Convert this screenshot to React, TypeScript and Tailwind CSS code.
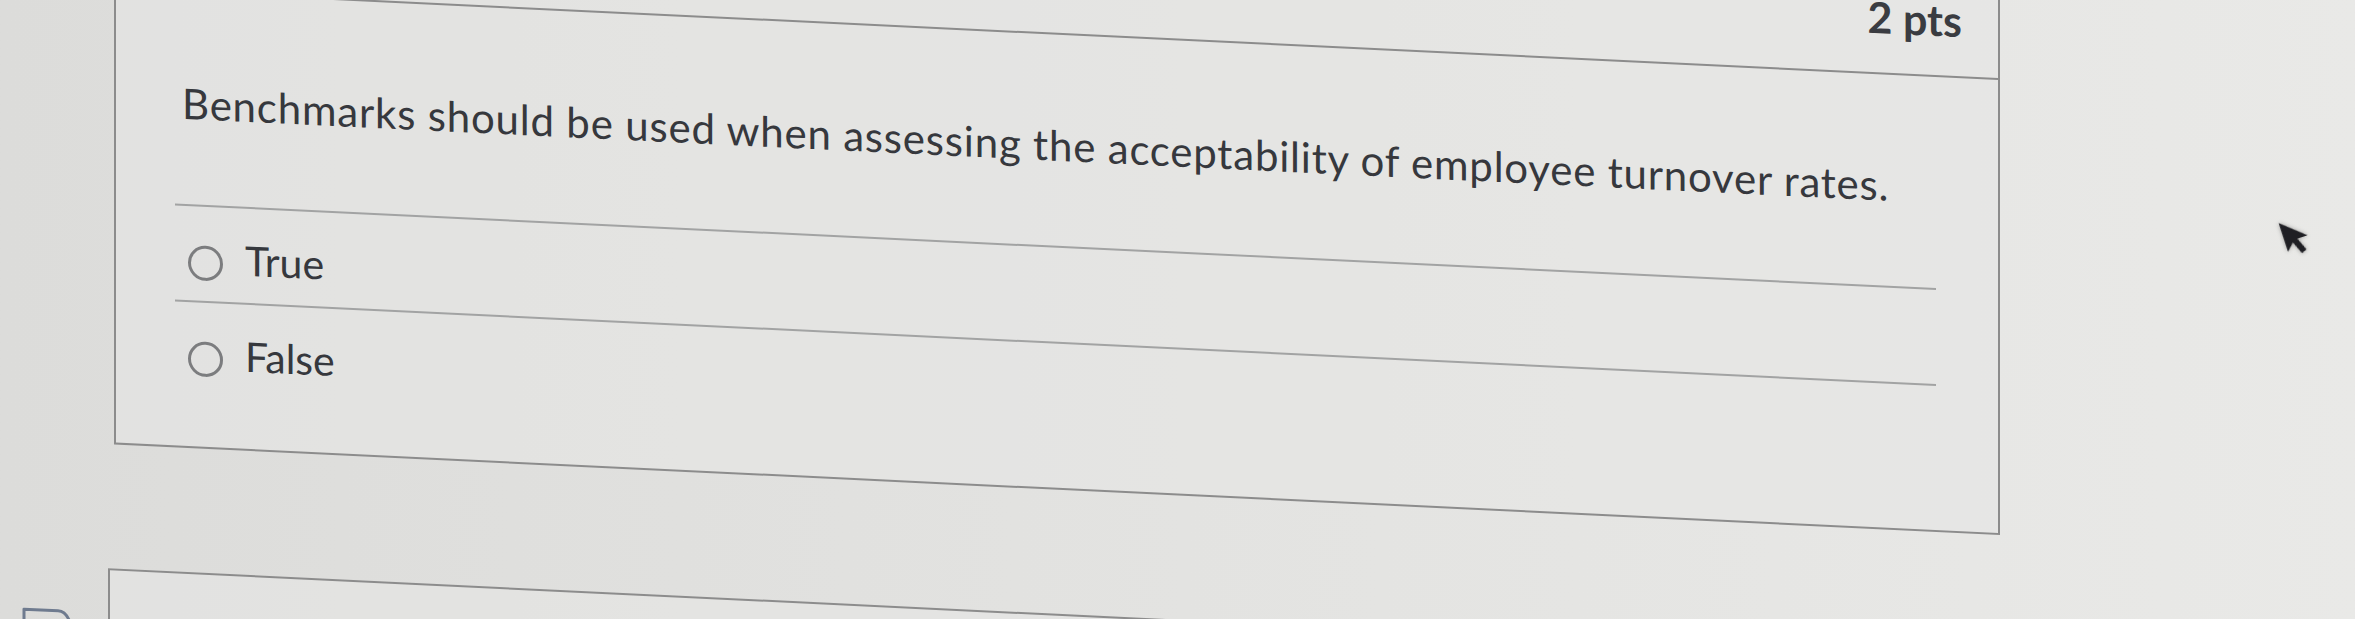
import React from "react";

type Answer = { id: string; label: string };

const answers: Answer[] = [
  { id: "true", label: "True" },
  { id: "false", label: "False" },
];

function Radio() {
  return (
    <span className="mt-[39px] block h-[35px] w-[35px] shrink-0 rounded-full border-[3px] border-[#7c7d7f]" />
  );
}

function AnswerRow({ answer, last }: { answer: Answer; last?: boolean }) {
  return (
    <label
      className={`flex h-[96px] items-start border-t-2 border-[#a2a3a3] pl-[13px] ${
        last ? "mb-[50px]" : ""
      }`}
    >
      <Radio />
      <span className="ml-[22px] mt-[27px] text-[41px] leading-[1.2] text-[#36383d]">
        {answer.label}
      </span>
    </label>
  );
}

function FlagIcon() {
  // bookmark flag shown in the quiz gutter
  return (
    <svg width="52" height="40" viewBox="0 0 52 40" fill="none" className="shrink-0">
      <path
        d="M2 40 V3 H36 Q44 3 48 14 L50 20"
        stroke="#6f7b8f"
        strokeWidth="3"
        strokeLinejoin="round"
      />
    </svg>
  );
}

function Cursor() {
  return (
    <svg
      width="28"
      height="44"
      viewBox="0 0 26 40"
      className="absolute left-[2282px] top-[216px] -rotate-[18deg] drop-shadow-[0_0_2px_rgba(0,0,0,0.35)]"
    >
      <path d="M2 2 L2 30 L9 23 L14 35 L19 33 L14 21 L24 21 Z" fill="#1f1f24" />
    </svg>
  );
}

export default function App() {
  return (
    <div
      className="relative h-[619px] w-[2355px] overflow-hidden bg-gradient-to-r from-[#dcdcda] via-[#e3e3e1] to-[#e9e9e7]"
      style={{ fontFamily: "Lato, 'Open Sans', sans-serif" }}
    >
      <div className="origin-top-left skew-y-[2.75deg]">
        {/* question card */}
        <div className="-mt-[118px] ml-[114px] w-[1886px] border-2 border-[#8c8c8c] bg-[#e6e6e4]/60">
          <div className="flex h-[100px] items-end justify-end border-b-2 border-[#8c8c8c] pb-[34px] pr-[36px]">
            <span className="text-[43px] font-bold leading-none text-[#3a3c41]">2 pts</span>
          </div>
          <div className="pt-[85px]">
            <p className="ml-[66px] text-[42px] leading-[1.2] tracking-[0.8px] text-[#36383d]">
              Benchmarks should be used when assessing the acceptability of employee turnover rates.
            </p>
            <div className="ml-[59px] mr-[62px] mt-[76px]">
              {answers.map((a, i) => (
                <AnswerRow key={a.id} answer={a} last={i === answers.length - 1} />
              ))}
            </div>
          </div>
        </div>

        {/* next question */}
        <div className="mt-[124px] flex">
          <div className="ml-[22px] mt-[42px]">
            <FlagIcon />
          </div>
          <div className="ml-[34px] h-[200px] w-[1890px] border-2 border-[#8c8c8c] bg-[#e6e6e4]/60" />
        </div>
      </div>
      <Cursor />
    </div>
  );
}
